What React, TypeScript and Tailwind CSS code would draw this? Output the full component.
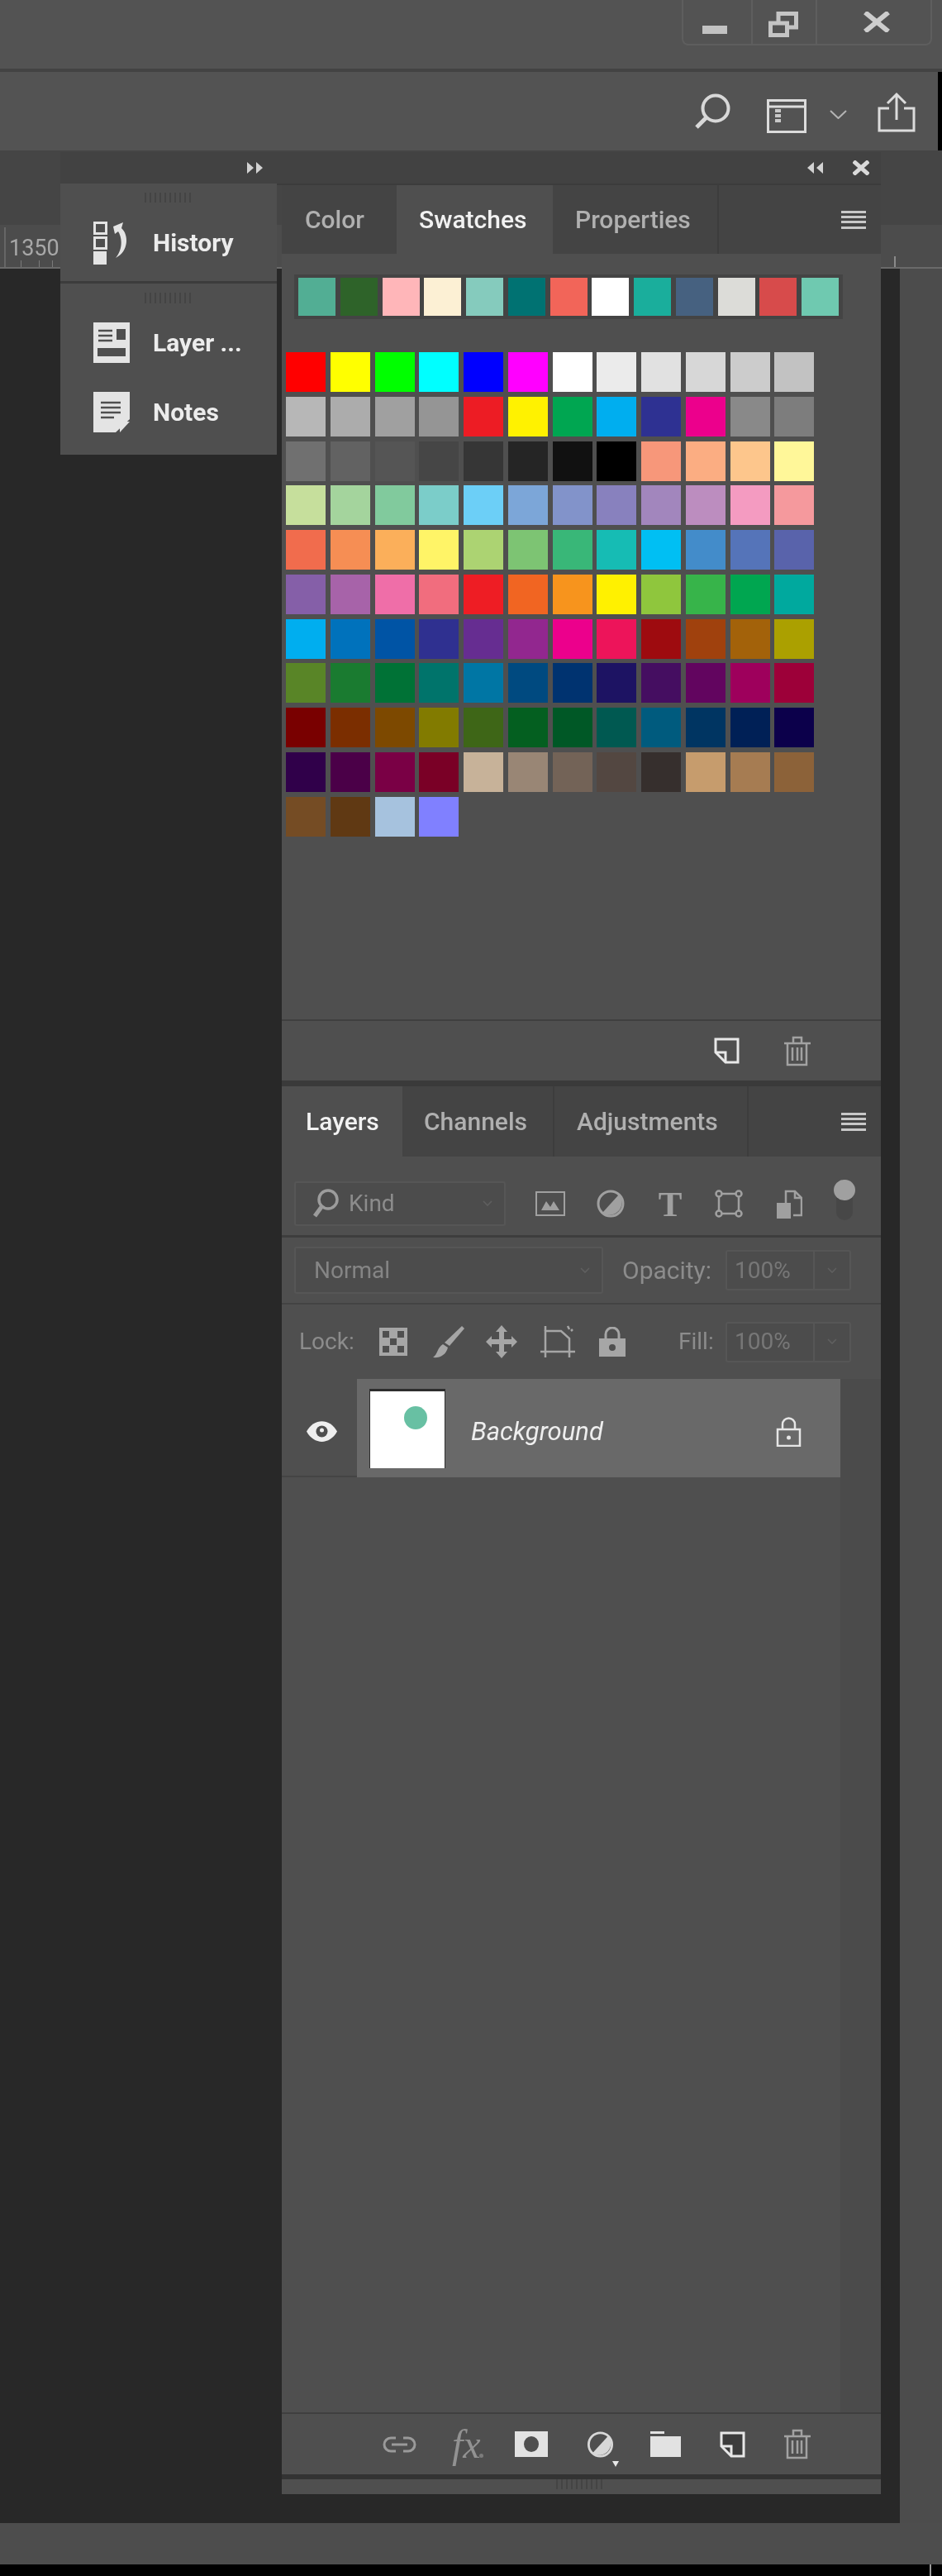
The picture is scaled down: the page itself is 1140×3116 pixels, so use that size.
const recent = ["#52ae94", "#2e6329", "#ffb6b9", "#fcf0d4", "#85cbbd", "#007272", "#f26559", "#ffffff", "#1aae9c", "#466180", "#dcdcd8", "#d74b4b", "#6fc9b0"];

const swatches = [
  "#ff0000", "#ffff00", "#00ff00", "#00ffff", "#0000ff", "#ff00ff", "#ffffff", "#ebebeb", "#e1e1e1", "#d7d7d7", "#cccccc", "#c2c2c2",
  "#b7b7b7", "#acacac", "#a0a0a0", "#959595", "#ed1c24", "#fff200", "#00a651", "#00aeef", "#2e3192", "#ec008c", "#898989", "#7d7d7d",
  "#707070", "#626262", "#555555", "#464646", "#363636", "#252525", "#111111", "#000000", "#f7977a", "#fbad82", "#fdc68c", "#fff799",
  "#c6df9c", "#a4d49d", "#81ca9d", "#7bcdc9", "#6ccff7", "#7ca6d8", "#8293ca", "#8881be", "#a286bd", "#bc8dbf", "#f49bc1", "#f5999d",
  "#f16c4d", "#f68e54", "#fbaf5a", "#fff467", "#acd372", "#7dc473", "#39b778", "#16bcb4", "#00bff3", "#438cca", "#5574b9", "#5963ab",
  "#855fa8", "#a763a9", "#ef6ea8", "#f16d7e", "#ee1d24", "#f16522", "#f7941d", "#fff100", "#8fc63d", "#37b44a", "#00a650", "#00a99e",
  "#00aeef", "#0072bc", "#0054a5", "#2f3090", "#662d91", "#92278f", "#ec008c", "#ed145a", "#9e0b0f", "#a0410d", "#a3620a", "#aba000",
  "#598527", "#1a7b30", "#007236", "#00746b", "#0076a4", "#004a80", "#003370", "#1d1363", "#450e61", "#62055f", "#9e005c", "#9d0039",
  "#790000", "#7b2e00", "#7d4900", "#827b00", "#3e6617", "#045f20", "#005826", "#005951", "#005b7e", "#003562", "#002056", "#0c004b",
  "#30004a", "#4b0048", "#7a0045", "#7a0026", "#c7b299", "#998675", "#736357", "#534741", "#362f2d", "#c69c6d", "#a67c52", "#8c6239",
  "#754c24", "#603913", "#a6c2de", "#8080ff",
];

function Grip({ className = "" }: { className?: string }) {
  return (
    <div className={`flex gap-[4px] ${className}`}>
      {[0, 1, 2, 3, 4, 5, 6, 7, 8, 9].map((i) => (
        <span key={i} className="h-full w-[2px] bg-[#444444]" />
      ))}
    </div>
  );
}

function MenuLines() {
  return (
    <svg viewBox="0 0 30 22" className="h-[22px] w-[30px]" fill="#c8c8c8">
      <rect y="0" width="30" height="3" />
      <rect y="6" width="30" height="3" />
      <rect y="12" width="30" height="3" />
      <rect y="19" width="30" height="3" />
    </svg>
  );
}

function TabLabel({ label, active }: { label: string; active?: boolean }) {
  return <span className={`text-[30px] font-medium leading-none ${active ? "text-[#f2f2f2]" : "text-[#b0b0b0]"}`}>{label}</span>;
}

function NewIcon({ fill = "none" }: { fill?: string }) {
  return (
    <svg viewBox="0 0 31 32" className="h-[32px] w-[31px]">
      <path d="M2 2H29V30H14L2 18Z" fill={fill} stroke="#e8e8e8" strokeWidth="3" />
      <path d="M2 18H14V30" fill="none" stroke="#e8e8e8" strokeWidth="3" />
    </svg>
  );
}

function TrashIcon() {
  return (
    <svg viewBox="0 0 34 37" className="h-[37px] w-[34px]" fill="none" stroke="#a2a2a2" strokeWidth="2.5">
      <path d="M1 9H33M5 9V35H28V9M12 9V2H22V9M11 14V30M17 14V30M22 14V30" />
    </svg>
  );
}

function Chevron() {
  return (
    <svg viewBox="0 0 12 8" className="h-[8px] w-[12px]" fill="none" stroke="#5f5f5f" strokeWidth="1.6">
      <path d="M1 1L6 6L11 1" />
    </svg>
  );
}

function PercentBox() {
  return (
    <div className="flex h-[49px] w-[152px] rounded-[3px] border-2 border-[#565656] bg-[#4c4c4c]">
      <span className="flex w-[104px] items-center pl-[9px] text-[28px] leading-none text-[#777777]">100%</span>
      <span className="flex flex-1 items-center justify-center border-l-2 border-[#565656]">
        <Chevron />
      </span>
    </div>
  );
}

function DockItem({ label, icon, className = "" }: { label: string; icon: React.ReactNode; className?: string }) {
  return (
    <div className={`flex items-center ${className}`}>
      <span className="ml-[40px] flex w-[72px] justify-start">{icon}</span>
      <span className="whitespace-nowrap text-[30px] font-bold leading-none text-[#ececec]">{label}</span>
    </div>
  );
}

export default function App() {
  return (
    <div className="h-[3116px] w-[1140px] overflow-hidden bg-[#4d4d4d]">
      <div className="relative h-[3116px] w-[1140px] bg-black font-['Roboto',sans-serif] blur-[0.6px]">
        {/* title bar */}
        <div className="flex h-[83px] justify-end bg-[#535353] pr-[12px]">
          <div className="flex h-[55px] w-[303px] rounded-b-[8px] border-x-2 border-b-2 border-[#5e5e5e] text-[#c4c4c4]">
            <div className="flex w-[84px] items-center justify-center border-r-2 border-[#5e5e5e] pt-[18px] pr-[6px]">
              <span className="h-[10px] w-[30px] bg-[#c2c2c2]" />
            </div>
            <div className="flex w-[78px] items-center justify-center border-r-2 border-[#5e5e5e] pr-[2px] pt-[5px]">
              <svg viewBox="0 0 36 31" className="h-[31px] w-[36px]" fill="none" stroke="#c4c4c4" strokeWidth="5">
                <path d="M2.5 14H22.5V28.5H2.5Z" />
                <path d="M12 12V2.5H33.5V19H24" />
              </svg>
            </div>
            <div className="flex flex-1 items-start justify-center pt-[14px] pl-[6px]">
              <svg viewBox="0 0 32 25" className="h-[25px] w-[32px]" stroke="#cdcdcd" strokeWidth="6">
                <path d="M2 1L30 24M30 1L2 24" />
              </svg>
            </div>
          </div>
        </div>
        <div className="h-[4px] bg-[#434343]" />

        {/* options bar */}
        <div className="flex h-[95px] w-[1135px] items-center justify-end bg-[#535353] pr-[27px]">
          <svg viewBox="0 0 45 45" className="mt-[1px] h-[45px] w-[45px]" fill="none" stroke="#d8d8d8">
            <circle cx="26" cy="18" r="15.5" strokeWidth="4" />
            <path d="M15 29L3 41" strokeWidth="5" />
          </svg>
          <svg viewBox="0 0 48 41" className="ml-[43px] mt-[12px] h-[41px] w-[48px]" fill="none" stroke="#dcdcdc" strokeWidth="3">
            <rect x="1.5" y="1.5" width="45" height="38" />
            <path d="M2 9H46" />
            <path d="M10 14H17M10 20H17M10 26H17" strokeWidth="4" stroke="#c8c8c8" />
          </svg>
          <svg viewBox="0 0 21 11" className="ml-[28px] mt-[7px] h-[11px] w-[21px]" fill="none" stroke="#b4b4b4" strokeWidth="2">
            <path d="M1 1L10.5 10L20 1" />
          </svg>
          <svg viewBox="0 0 46 49" className="ml-[37px] mt-[2px] h-[49px] w-[46px]" fill="none" stroke="#dcdcdc" strokeWidth="3">
            <path d="M14 20H2V47H44V20H32" />
            <path d="M23 34V3M12 14L23 3L34 14" />
          </svg>
        </div>

        {/* document tab strip and ruler */}
        <div className="h-[90px] bg-[#454545]" />
        <div className="relative h-[53px] border-b-2 border-[#6a6a6a] bg-[#4c4c4c]">
          <span className="absolute left-[5px] top-[3px] h-[48px] w-[2px] bg-[#666666]" />
          <span className="absolute left-[11px] top-[15px] text-[27px] leading-none text-[#a8a8a8]">1350</span>
          <span className="absolute left-[25px] top-[43px] h-[8px] w-[1px] bg-[#7a7a7a]" />
          <span className="absolute left-[47px] top-[43px] h-[8px] w-[1px] bg-[#7a7a7a]" />
          <span className="absolute left-[63px] top-[43px] h-[8px] w-[1px] bg-[#7a7a7a]" />
          <span className="absolute left-[1082px] top-[38px] h-[13px] w-[2px] bg-[#8a8a8a]" />
        </div>

        {/* canvas and scrollbar */}
        <div className="flex h-[2727px]">
          <div className="flex-1 bg-[#282828]" />
          <div className="w-[51px] bg-[#4c4c4c]" />
        </div>
        <div className="h-[50px] bg-[#4d4d4d]" />
        <div className="relative h-[14px] bg-black">
          <span className="absolute left-[1125px] top-0 h-full w-[2px] bg-[#9a9a9a]" />
        </div>

        {/* floating panel */}
        <div className="absolute left-[73px] top-[184px] w-[993px]">
          <div className="flex h-[40px] items-center border-b-2 border-[#3c3c3c] bg-[#424242]">
            <svg viewBox="0 0 22 14" className="ml-[225px] h-[14px] w-[22px]" fill="#d2d2d2">
              <path d="M1 0L9 7L1 14ZM12 0L20 7L12 14Z" />
            </svg>
            <svg viewBox="0 0 22 14" className="ml-[655px] h-[14px] w-[22px]" fill="#d2d2d2">
              <path d="M21 0L13 7L21 14ZM10 0L2 7L10 14Z" />
            </svg>
            <svg viewBox="0 0 20 18" className="ml-[35px] h-[18px] w-[20px]" stroke="#dadada" strokeWidth="5">
              <path d="M1 1L19 17M19 1L1 17" />
            </svg>
          </div>

          <div className="flex items-start">
            {/* collapsed dock */}
            <div className="-mt-[2px] h-[328px] w-[262px] bg-[#4f4f4f]">
              <div className="h-[121px] border-b-[3px] border-[#3c3c3c] pt-[11px]">
                <Grip className="ml-[102px] h-[12px]" />
                <DockItem
                  label="History"
                  className="mt-[23px]"
                  icon={
                    <svg viewBox="0 0 44 52" className="h-[52px] w-[44px]">
                      <rect x="1.5" y="1.5" width="14" height="13" fill="none" stroke="#e4e4e4" strokeWidth="3" />
                      <rect x="1.5" y="19.5" width="14" height="13" fill="none" stroke="#e4e4e4" strokeWidth="3" />
                      <rect x="0" y="36" width="16" height="16" fill="#e4e4e4" />
                      <path d="M24 6L36 1L34 8C43 16 43 36 27 44C37 32 34 18 30 12L26 15Z" fill="#e4e4e4" />
                    </svg>
                  }
                />
              </div>
              <Grip className="ml-[102px] mt-[11px] h-[13px]" />
              <DockItem
                label="Layer ..."
                className="mt-[23px]"
                icon={
                  <svg viewBox="0 0 44 49" className="h-[49px] w-[44px]">
                    <path fillRule="evenodd" d="M0 0H44V49H0ZM28 8V21H39V8ZM5 31V41H39V31Z" fill="#e4e4e4" />
                    <path d="M6 10H23M6 16H23M6 22H23" stroke="#4f4f4f" strokeWidth="2.5" />
                  </svg>
                }
              />
              <DockItem
                label="Notes"
                className="mt-[35px]"
                icon={
                  <svg viewBox="0 0 44 49" className="h-[49px] w-[44px]">
                    <path d="M0 0H44V33L27 49H0Z" fill="#e4e4e4" />
                    <path d="M9 13H33M9 19H33M9 25H33M9 31H25" stroke="#4f4f4f" strokeWidth="2.5" />
                    <path d="M32 36H44L32 49Z" fill="#e4e4e4" />
                  </svg>
                }
              />
            </div>
            <div className="w-[6px]" />

            {/* tab groups */}
            <div className="w-[725px] bg-[#4f4f4f]">
              <div className="flex h-[83px] items-center bg-[#444444]">
                <div className="flex h-full w-[139px] items-center pl-[28px]">
                  <TabLabel label="Color" />
                </div>
                <div className="flex h-full w-[189px] items-center bg-[#4f4f4f] pl-[27px]">
                  <TabLabel label="Swatches" active />
                </div>
                <div className="flex h-full w-[201px] items-center border-r-2 border-[#3d3d3d] pl-[27px]">
                  <TabLabel label="Properties" />
                </div>
                <div className="ml-auto mr-[18px]">
                  <MenuLines />
                </div>
              </div>

              <div className="h-[928px] border-b-2 border-[#3f3f3f] pt-[25px]">
                <div className="ml-[15px] flex h-[54px] w-[664px] items-center gap-[5.75px] bg-[#444444] px-[5px]">
                  {recent.map((c, i) => (
                    <span key={i} className="h-[46px] w-[45px]" style={{ backgroundColor: c }} />
                  ))}
                </div>
                <div className="ml-[5px] mt-[40px] grid grid-cols-[repeat(12,48px)] gap-[5.75px]">
                  {swatches.map((c, i) => (
                    <span key={i} className="h-[48px]" style={{ backgroundColor: c }} />
                  ))}
                </div>
              </div>

              <div className="flex h-[72px] items-center justify-end pr-[84px]">
                <NewIcon />
                <span className="ml-[53px]">
                  <TrashIcon />
                </span>
              </div>
              <div className="h-[7px] bg-[#3a3a3a]" />

              <div className="flex h-[85px] items-center bg-[#444444]">
                <div className="flex h-full w-[146px] items-center bg-[#4f4f4f] pl-[29px]">
                  <TabLabel label="Layers" active />
                </div>
                <div className="flex h-full w-[184px] items-center border-r-2 border-[#3d3d3d] pl-[26px]">
                  <TabLabel label="Channels" />
                </div>
                <div className="flex h-full w-[235px] items-center border-r-2 border-[#3d3d3d] pl-[27px]">
                  <TabLabel label="Adjustments" />
                </div>
                <div className="ml-auto mr-[18px]">
                  <MenuLines />
                </div>
              </div>

              {/* filter row */}
              <div className="flex h-[98px] items-center border-b-[3px] border-[#3d3d3d] pl-[15px] pt-[19px]">
                <div className="flex h-[54px] w-[256px] items-center rounded-[3px] border-2 border-[#565656] bg-[#4c4c4c] pl-[20px]">
                  <svg viewBox="0 0 32 36" className="h-[36px] w-[32px]" fill="none" stroke="#9c9c9c">
                    <circle cx="19" cy="13" r="11" strokeWidth="3.5" />
                    <path d="M11 22L3 33" strokeWidth="5" />
                  </svg>
                  <span className="ml-[12px] text-[28px] leading-none text-[#8c8c8c]">Kind</span>
                  <span className="ml-auto mr-[14px]">
                    <Chevron />
                  </span>
                </div>
                <svg viewBox="0 0 36 30" className="ml-[36px] h-[30px] w-[36px]" fill="none" stroke="#a0a0a0" strokeWidth="2">
                  <rect x="1" y="1" width="34" height="28" />
                  <path d="M7 23L13 12L18 19L22 12L29 23Z" fill="#a0a0a0" stroke="none" />
                </svg>
                <svg viewBox="0 0 34 34" className="ml-[38px] h-[34px] w-[34px]">
                  <circle cx="17" cy="17" r="15" fill="none" stroke="#a0a0a0" strokeWidth="3" />
                  <path d="M27 6A15 15 0 0 1 7 28Z" fill="#a0a0a0" />
                </svg>
                <span className="ml-[39px] w-[32px] text-center font-['Liberation_Serif',serif] text-[43px] font-bold leading-none text-[#a0a0a0]">T</span>
                <svg viewBox="0 0 34 34" className="ml-[38px] h-[34px] w-[34px]" fill="none" stroke="#a0a0a0" strokeWidth="2.5">
                  <rect x="5" y="5" width="24" height="24" />
                  <circle cx="5" cy="5" r="3.5" fill="#4f4f4f" />
                  <circle cx="29" cy="5" r="3.5" fill="#4f4f4f" />
                  <circle cx="5" cy="29" r="3.5" fill="#4f4f4f" />
                  <circle cx="29" cy="29" r="3.5" fill="#4f4f4f" />
                </svg>
                <svg viewBox="0 0 31 35" className="ml-[41px] h-[35px] w-[31px]" fill="none" stroke="#a0a0a0" strokeWidth="2.5">
                  <path d="M11 16V2H22L30 10V31H20" />
                  <path d="M22 2V10H30" />
                  <rect x="0" y="16" width="17" height="19" fill="#a0a0a0" stroke="none" />
                </svg>
                <div className="relative -mt-[9px] ml-[38px] h-[49px] w-[26px]">
                  <span className="absolute left-[3px] top-0 h-[49px] w-[20px] rounded-full bg-[#474747]" />
                  <span className="absolute left-0 top-0 h-[25px] w-[26px] rounded-full bg-[#a0a0a0]" />
                </div>
              </div>

              {/* blend row */}
              <div className="flex h-[81px] items-center border-b-2 border-[#434343] pl-[15px]">
                <div className="flex h-[57px] w-[374px] items-center rounded-[3px] border-2 border-[#565656] bg-[#4c4c4c] pl-[22px]">
                  <span className="text-[28px] leading-none text-[#858585]">Normal</span>
                  <span className="ml-auto mr-[14px]">
                    <Chevron />
                  </span>
                </div>
                <span className="ml-[23px] w-[125px] text-[30px] leading-none text-[#8c8c8c]">Opacity:</span>
                <PercentBox />
              </div>

              {/* lock row */}
              <div className="flex h-[90px] items-center pl-[21px]">
                <span className="w-[97px] text-[28px] leading-none text-[#8c8c8c]">Lock:</span>
                <svg viewBox="0 0 34 34" className="h-[34px] w-[34px]">
                  <rect x="0" y="0" width="34" height="34" fill="#a6a6a6" />
                  <path d="M4 4H12V12H4ZM22 4H30V12H22ZM13 13H21V21H13ZM4 22H12V30H4ZM22 22H30V30H22Z" fill="#4f4f4f" />
                </svg>
                <svg viewBox="0 0 38 40" className="ml-[31px] h-[40px] w-[38px]">
                  <path d="M35 1L38 4L20 25L14 21Z" fill="#a6a6a6" />
                  <path d="M12 23L18 27C16 36 8 40 0 39C6 35 5 27 12 23Z" fill="#a6a6a6" />
                </svg>
                <svg viewBox="0 0 38 40" className="ml-[26px] h-[40px] w-[38px]" fill="#a6a6a6">
                  <path d="M19 0L26 8H22V17H31V13L38 20L31 27V23H22V32H26L19 40L12 32H16V23H7V27L0 20L7 13V17H16V8H12Z" />
                </svg>
                <svg viewBox="0 0 44 40" className="ml-[27px] h-[40px] w-[44px]" fill="none" stroke="#a6a6a6" strokeWidth="2.5">
                  <path d="M7 7V32H36V16L26 7Z" />
                  <path d="M7 1V7M1 32H7M36 32H43M36 32V39M7 32V39M34 1L36 5M40 5L38 7" />
                </svg>
                <svg viewBox="0 0 32 36" className="ml-[28px] h-[36px] w-[32px]">
                  <path d="M8 15V9A8 8 0 0 1 24 9V15" fill="none" stroke="#a6a6a6" strokeWidth="3" />
                  <path fillRule="evenodd" d="M0 14H32V36H0ZM16 21A4 4 0 1 0 16 29A4 4 0 0 0 16 21Z" fill="#a6a6a6" />
                </svg>
                <span className="ml-[64px] w-[57px] text-[28px] leading-none text-[#8c8c8c]">Fill:</span>
                <PercentBox />
              </div>

              {/* layer list */}
              <div className="flex h-[1252px] border-b-2 border-[#3f3f3f]">
                <div className="flex h-[119px] w-[91px] items-center justify-start border-b-2 border-[#444444] pl-[29px] pt-[10px]">
                  <svg viewBox="0 0 39 27" className="h-[27px] w-[39px]">
                    <path d="M1 13.5C10 -3 29 -3 38 13.5C29 30 10 30 1 13.5Z" fill="#efefef" />
                    <circle cx="19.5" cy="13.5" r="7" fill="#4f4f4f" />
                    <circle cx="19.5" cy="12" r="2.5" fill="#efefef" />
                  </svg>
                </div>
                <div className="flex h-[119px] w-[585px] items-center bg-[#696969] pl-[15px]">
                  <div className="flex h-[96px] w-[92px] justify-center border-x-[1px] border-t-[3px] border-[#2e2e2e] bg-white pl-[20px] pt-[18px]">
                    <span className="h-[28px] w-[28px] rounded-full bg-[#68c0a3]" />
                  </div>
                  <span className="ml-[31px] mt-[8px] text-[31px] italic leading-none text-[#eeeeee]">Background</span>
                  <svg viewBox="0 0 31 36" className="ml-auto mr-[47px] mt-[8px] h-[36px] w-[31px]" fill="none" stroke="#e6e6e6" strokeWidth="2.5">
                    <path d="M8 15V9A7.5 7.5 0 0 1 23 9V15" />
                    <rect x="2" y="15" width="27" height="20" />
                    <circle cx="15.5" cy="25" r="2.5" fill="#e6e6e6" stroke="none" />
                  </svg>
                </div>
                <div className="flex-1 bg-[#4b4b4b]" />
              </div>

              {/* layer footer */}
              <div className="flex h-[73px] items-center pl-[121px]">
                <svg viewBox="0 0 43 22" className="h-[22px] w-[43px]" fill="none" stroke="#9a9a9a" strokeWidth="3">
                  <path d="M17 3H11A8 8 0 0 0 11 19H17M26 3H32A8 8 0 0 1 32 19H26M12 11H31" />
                </svg>
                <span className="relative ml-[42px] w-[40px] font-['Liberation_Serif',serif] text-[48px] italic leading-none text-[#929292]">
                  fx
                  <span className="absolute left-[33px] top-[35px] h-[5px] w-[5px] rounded-full bg-[#7c7c7c]" />
                </span>
                <svg viewBox="0 0 40 31" className="ml-[36px] h-[31px] w-[40px]">
                  <path fillRule="evenodd" d="M0 0H40V31H0ZM20 6A9 9.5 0 1 0 20 25A9 9.5 0 0 0 20 6Z" fill="#e2e2e2" />
                </svg>
                <div className="relative ml-[47px] h-[32px] w-[33px]">
                  <svg viewBox="0 0 34 34" className="h-[32px] w-[33px]">
                    <circle cx="17" cy="17" r="15" fill="none" stroke="#d8d8d8" strokeWidth="3" />
                    <path d="M27 6A15 15 0 0 1 7 28Z" fill="#d8d8d8" />
                  </svg>
                  <span className="absolute left-[31px] top-[36px] h-0 w-0 border-x-[4px] border-t-[7px] border-x-transparent border-t-[#e8e8e8]" />
                </div>
                <svg viewBox="0 0 37 31" className="ml-[44px] h-[31px] w-[37px]" fill="#e2e2e2">
                  <rect x="0" y="0" width="17" height="3" />
                  <path d="M0 6H37V31H0Z" />
                </svg>
                <span className="ml-[47px]">
                  <NewIcon fill="#3c3c3c" />
                </span>
                <span className="ml-[46px]">
                  <TrashIcon />
                </span>
              </div>
              <div className="h-[6px] bg-[#333333]" />
              <div className="relative h-[18px]">
                <Grip className="absolute left-[332px] top-0 h-[12px]" />
              </div>
            </div>
          </div>
        </div>
      </div>
    </div>
  );
}
